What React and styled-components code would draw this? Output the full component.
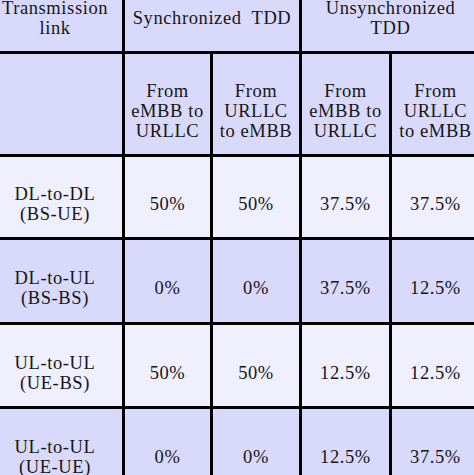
import React from 'react'
import styled, { createGlobalStyle } from 'styled-components'

const GlobalStyle = createGlobalStyle`
  html, body {
    margin: 0;
    padding: 0;
    background: #ffffff;
    overflow: hidden;
  }
`

const HEADER_BG = '#d9d9fb'
const LIGHT_BG = '#efeffd'

const rows = [
  { link: ['DL-to-DL', '(BS-UE)'], values: ['50%', '50%', '37.5%', '37.5%'] },
  { link: ['DL-to-UL', '(BS-BS)'], values: ['0%', '0%', '37.5%', '12.5%'] },
  { link: ['UL-to-UL', '(UE-BS)'], values: ['50%', '50%', '12.5%', '12.5%'] },
  { link: ['UL-to-UL', '(UE-UE)'], values: ['0%', '0%', '12.5%', '37.5%'] },
]

const directions = [
  ['From', 'eMBB to', 'URLLC'],
  ['From', 'URLLC', 'to eMBB'],
  ['From', 'eMBB to', 'URLLC'],
  ['From', 'URLLC', 'to eMBB'],
]

export default function App() {
  return (
    <>
      <GlobalStyle />
      <Viewport>
        <Table>
          <Cell $bg={HEADER_BG}>
            <span>Transmission</span>
            <span>link</span>
          </Cell>
          <Cell $bg={HEADER_BG} $span={2} $wide>
            <span>Synchronized TDD</span>
          </Cell>
          <Cell $bg={HEADER_BG} $span={2}>
            <span>Unsynchronized</span>
            <span>TDD</span>
          </Cell>

          <Cell $bg={HEADER_BG} />
          {directions.map((lines, i) => (
            <Cell key={i} $bg={HEADER_BG}>
              {lines.map((l) => (
                <span key={l}>{l}</span>
              ))}
            </Cell>
          ))}

          {rows.map((row, r) => {
            const bg = r % 2 === 0 ? LIGHT_BG : HEADER_BG
            return (
              <React.Fragment key={r}>
                <Cell $bg={bg}>
                  {row.link.map((l) => (
                    <span key={l}>{l}</span>
                  ))}
                </Cell>
                {row.values.map((v, i) => (
                  <Cell key={i} $bg={bg}>
                    <span>{v}</span>
                  </Cell>
                ))}
              </React.Fragment>
            )
          })}
        </Table>
      </Viewport>
    </>
  )
}

const Viewport = styled.div`
  width: 474px;
  height: 475px;
  overflow: hidden;
`

const Table = styled.div`
  display: grid;
  grid-template-columns: 134px 85px 86px 87px 87px;
  grid-template-rows: 80px 100px 80px 82px 81px 81px;
  gap: 3px;
  padding: 3px;
  background: #000000;
  width: max-content;
  margin-top: -32px;
  margin-left: -15px;
`

const Cell = styled.div`
  grid-column: span ${(p) => p.$span || 1};
  background: ${(p) => p.$bg};
  display: flex;
  flex-direction: column;
  align-items: center;
  justify-content: center;
  padding-top: 14px;
  box-sizing: border-box;
  font-family: 'Liberation Serif', 'Times New Roman', serif;
  font-size: 18.5px;
  letter-spacing: 0.6px;
  word-spacing: ${(p) => (p.$wide ? '5px' : '0')};
  line-height: 20px;
  color: #161616;
  text-align: center;
  white-space: nowrap;
`
